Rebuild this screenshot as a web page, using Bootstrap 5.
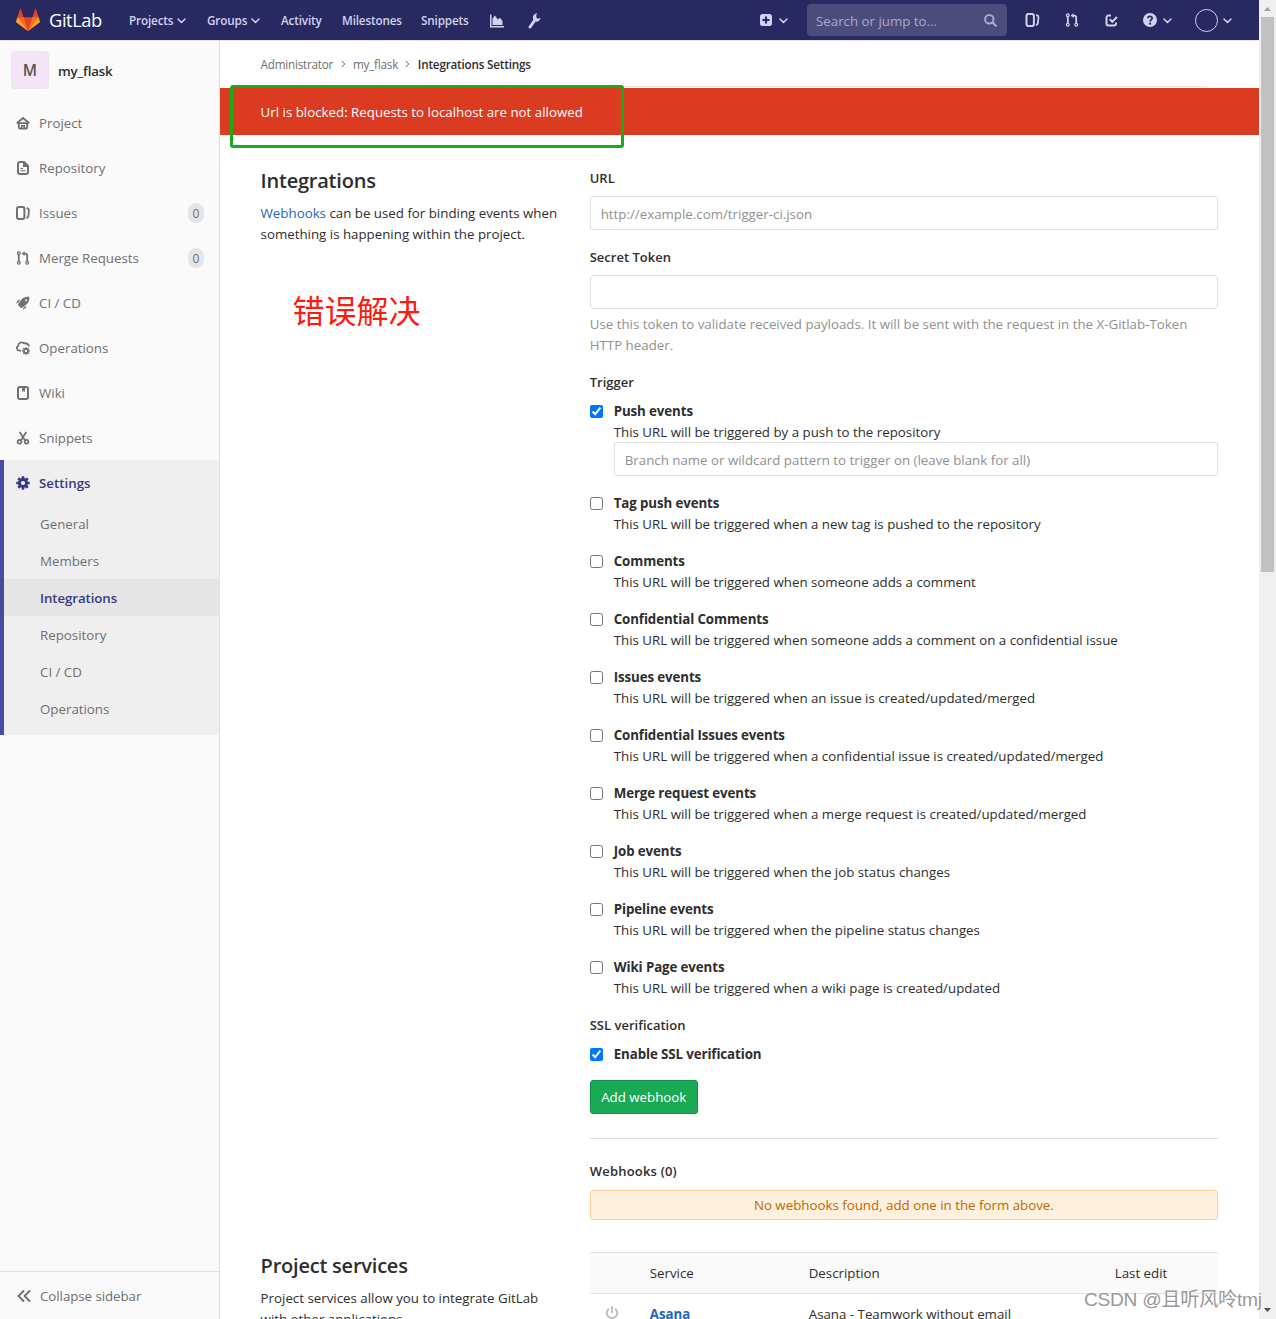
<!DOCTYPE html>
<html lang="en">
<head>
<meta charset="utf-8">
<title>Integrations Settings · my_flask · GitLab</title>
<link href="https://cdn.jsdelivr.net/npm/bootstrap@5.3.0/dist/css/bootstrap.min.css" rel="stylesheet">
<style>
body{font-family:"Open Sans","Noto Sans CJK SC",sans-serif;font-size:13.3px;line-height:21px;color:#2e2e2e;height:100vh;overflow:hidden}
a{text-decoration:none}
svg{display:block;flex:none}
.app{width:1259px}
.topbar{height:40px;background:#292961;color:#d1d1f0;font-size:11.7px;font-weight:600;letter-spacing:-.14px;padding-left:16px;box-shadow:0 1px 0 #e5e5e5;z-index:2}
.topbar a{color:#d1d1f0}
.topbar>a{padding-top:1px}
.brand-word{font-size:18.3px;font-weight:400;color:#fff!important;width:80px;margin-left:9px;letter-spacing:-.4px;padding:0 0 1px!important}
.w-proj{width:78px}.w-grp{width:74px}.w-act{width:61px}.w-mil{width:79px}.w-snip{width:68px}.w-chart{width:39px}
.caret{width:9px;height:6px;margin-left:4px}
.jump{width:200px;height:32px;background:#4c4c7c;border-radius:4px;margin:0 18px 0 19px;padding:0 10px 0 9px;color:#a9a9cf;font-size:13.3px;font-weight:400;letter-spacing:0}
.jump span{padding-top:2px}
.face{width:23px;height:23px;border:1px solid #d1d1f0;border-radius:50%}
.sidebar{width:220px;background:#fafafa;border-right:1px solid #e1e1e1;flex:none}
.sidebar a{color:#707070}
.context{padding:11px 11px 10px;height:60px;gap:9px}
.letter{width:38px;height:38px;border-radius:4px;background:#f3e5f5;color:#555;font-size:15.5px;border:1px solid #eee3f0}
.proj-name{padding-top:2px;letter-spacing:-.15px}
.item{height:45px;padding:1px 15px 0 16px;gap:9px}
.item>svg{width:14px;height:14px}
.count{background:#e5e5e5;border-radius:10px;width:16px;height:20px;line-height:21px;text-align:center;font-size:12px;font-weight:400;color:#707070}
.open-group{background:#efefef;box-shadow:inset 4px 0 0 #4b4ba3;padding-bottom:8px}
.open-group .top{color:#393982;font-weight:600}
.sub{height:37px;padding:1px 0 0 40px}
.sub.on{background:rgba(0,0,0,.04);color:#393982;font-weight:600;letter-spacing:-.1px}
.collapser{height:48px;border-top:1px solid #e1e1e1;padding:1px 0 0 17px;gap:9px;letter-spacing:-.05px}
.page{padding:0 41px 0 40.600px}
.crumbs{height:47px;margin:0 11px 0 0;border-bottom:1px solid #e5e5e5;font-size:11.700px;color:#707070;padding-top:3px;letter-spacing:-.22px;gap:7.400px}
.crumbs svg{margin-top:-2px}
.crumbs .here{color:#2e2e2e;font-weight:600;letter-spacing:-.2px}
.flash{height:47px;margin:1px -41px 0 -40.600px;padding:1px 41px 0 40.600px;background:#db3b21;color:#fff}
.marker{position:absolute;left:230px;top:85px;width:394px;height:63px;border:3px solid #1aaa1a;border-radius:3px;z-index:3}
.row.wide{--bs-gutter-x:30px}
.title{font-size:20px;line-height:26px;font-weight:600;margin:0 0 9px;letter-spacing:-.22px}
.blue{color:#1b69b6}
.note-red{font-size:32px;line-height:34px;color:#ff1a0f;font-family:"Noto Sans CJK SC",sans-serif;margin:47px 0 0 32px}
.lab{font-weight:600;margin-bottom:7px;display:block;font-size:13px}
.field{height:34px;border:1px solid #dfdfdf;border-radius:3px;padding:1px 10px 0;font-size:13.3px;color:#2e2e2e;font-family:inherit}
.field::placeholder{color:#919191;opacity:1}
.field.branch{margin:-1px 0 1px;padding-top:2px}
.help{color:#919191;margin:5px 0 16px}
.check{gap:11px;margin-bottom:16px}
.check input[type=checkbox]{width:13px;height:13px;margin:4px 0 0;flex:none}
.check b{font-weight:700;display:block;letter-spacing:-.1px}
.btn-add{background:#1aaa55;border:1px solid #168f48;color:#fff;border-radius:3px;height:34px;width:108px;padding:2px 0 0;font-size:13.3px}
.rule{border:0;border-top:1px solid #dcdcdc;opacity:1;margin:24px 0 22px}
.none{height:30px;border:1px solid #fdcf91;background:#fff1de;color:#c26700;border-radius:3px;line-height:29px;margin-bottom:32px}
.services{--bs-table-color:#2e2e2e;border-color:#e5e5e5;table-layout:fixed;border-top:1px solid #e1e1e1;margin:0}
.services>*>tr>*{padding:10px 10px 9px;font-weight:400}
.services thead th{--bs-table-bg:#fafafa}
.scroller{width:17px;background:#f0f0f0;padding:0 3px 0 2px}
.thumb{width:13px;height:555px;background:#c1c1c1}
.stamp{position:absolute;left:1084px;top:1285px;font:19.2px/30px "Liberation Sans","Noto Sans CJK SC",sans-serif;letter-spacing:-.3px;color:#999;text-shadow:1px 1px 0 #fff;white-space:nowrap;z-index:5}
</style>
</head>
<body>
<svg width="0" height="0" class="position-absolute">
  <defs>
    <symbol id="i-down" viewBox="0 0 9 6"><path d="M1 1l3.5 3.5L8 1" fill="none" stroke="currentColor" stroke-width="1.500" stroke-linecap="round" stroke-linejoin="round"/></symbol>
    <symbol id="i-issues" viewBox="0 0 14 14"><rect x="1" y="1" width="7.4" height="12" rx="2" fill="none" stroke="currentColor" stroke-width="2"/><path d="M10.6 2.200c2 .2 2.500 1 2.300 2.700L12.400 9.800c-.2 1.500-.7 2.200-2 2.300" fill="none" stroke="currentColor" stroke-width="1.800"/></symbol>
    <symbol id="i-merge" viewBox="0 0 14 14"><g fill="none" stroke="currentColor"><path d="M2.800 4v6" stroke-width="1.800"/><path d="M8 2.600h1.200c1.400 0 2 .7 2 2V10" stroke-width="1.800"/><circle cx="2.800" cy="2.300" r="1.400" stroke-width="1.200"/><circle cx="2.800" cy="11.800" r="1.400" stroke-width="1.200"/><circle cx="11.200" cy="11.800" r="1.400" stroke-width="1.200"/></g><path d="M8.600.2v4.800L5.600 2.600z" fill="currentColor"/></symbol>
    <symbol id="i-gear" viewBox="0 0 16 16"><circle cx="8" cy="8" r="4.100" fill="none" stroke="currentColor" stroke-width="3.400"/><path d="M8 .3v3M8 12.700v3M.3 8h3M12.700 8h3M2.600 2.600l2 2M11.400 11.400l2 2M2.600 13.400l2-2M11.400 4.600l2-2" stroke="currentColor" stroke-width="3"/></symbol>
  </defs>
</svg>

<div class="d-flex h-100">
<div class="app d-flex flex-column h-100">
  <header class="topbar d-flex align-items-center flex-shrink-0 position-relative">
    <svg width="24" height="24" viewBox="0 0 36 36"><path fill="#e24329" d="M2 14l9.380 9v-9l-4-12.280c-.205-.632-1.176-.632-1.380 0zM34 14l-9.380 9v-9l4-12.280c.205-.632 1.176-.632 1.380 0zM18 34.380L3 14h30z"/><path fill="#fc6d26" d="M18 34.380L11.380 14H2l4 11zM18 34.380L24.620 14H34l-4 11z"/><path fill="#fca326" d="M2 14L.1 20.160c-.18.565 0 1.200.5 1.560l17.420 12.660zM34 14l1.900 6.160c.18.565 0 1.200-.5 1.560L18 34.380z"/></svg>
    <a class="brand-word" href="#">GitLab</a>
    <a class="w-proj d-flex align-items-center" href="#">Projects<svg class="caret"><use href="#i-down"/></svg></a>
    <a class="w-grp d-flex align-items-center" href="#">Groups<svg class="caret"><use href="#i-down"/></svg></a>
    <a class="w-act" href="#">Activity</a>
    <a class="w-mil" href="#">Milestones</a>
    <a class="w-snip" href="#">Snippets</a>
    <a class="w-chart ps-1" href="#"><svg width="14" height="14" viewBox="0 0 14 14" style="margin-left:-3px"><path fill="currentColor" d="M0 .5h1.500V12H14v1.500H0zM2.500 11V4.500L5 1.500l2.800 4L10 3.800 12.500 7v4z"/></svg></a>
    <a href="#"><svg width="13" height="16" viewBox="0 0 13 16"><path d="M2 14L7 7" stroke="currentColor" stroke-width="3" stroke-linecap="round"/><path d="M9.200.3C5.500.8 4.200 3.800 5.200 6.600l2.600 2c2.600.4 4.400-1.500 4.700-4.200l-2 1.300-2-.8-.3-2.300z" fill="currentColor"/></svg></a>
    <div class="ms-auto d-flex align-items-center">
      <svg width="12" height="12" viewBox="0 0 12 12"><rect width="12" height="12" rx="2.500" fill="#d1d1f0"/><path d="M6 2.500v7M2.500 6h7" stroke="#292961" stroke-width="2"/></svg>
      <svg class="caret" style="margin:2px 0 0 7px"><use href="#i-down"/></svg>
      <div class="jump d-flex align-items-center justify-content-between"><span>Search or jump to...</span><svg width="13" height="13" viewBox="0 0 13 13"><circle cx="5.300" cy="5.300" r="4.200" fill="none" stroke="currentColor" stroke-width="2"/><path d="M8.500 8.500l3.300 3.300" stroke="currentColor" stroke-width="2.200" stroke-linecap="round"/></svg></div>
      <svg width="15" height="14"><use href="#i-issues"/></svg>
      <svg width="14" height="14" style="margin-left:25px"><use href="#i-merge"/></svg>
      <svg width="13" height="13" viewBox="0 0 13 13" style="margin-left:26px"><path d="M6 1.500H3.500a2 2 0 0 0-2 2v6a2 2 0 0 0 2 2h5.500a2 2 0 0 0 2-2V8.500M4.800 5.300l2.500 2.500L12 3" fill="none" stroke="currentColor" stroke-width="2"/></svg>
      <svg width="14" height="14" viewBox="0 0 14 14" style="margin-left:25px"><circle cx="7" cy="7" r="7" fill="#d1d1f0"/><path d="M4.900 5.300C5 2.700 9.300 2.800 9.200 5.300 9.100 6.800 7.100 6.700 7.100 8.500" fill="none" stroke="#292961" stroke-width="1.700"/><circle cx="7.100" cy="10.700" r="1.100" fill="#292961"/></svg>
      <svg class="caret" style="margin:2px 0 0 6px"><use href="#i-down"/></svg>
      <span class="face" style="margin-left:23px"></span>
      <svg class="caret" style="margin:2px 27px 0 5px"><use href="#i-down"/></svg>
    </div>
  </header>

  <div class="d-flex flex-grow-1 overflow-hidden">
    <nav class="sidebar d-flex flex-column">
      <div class="context d-flex"><span class="letter d-flex align-items-center justify-content-center fw-semibold">M</span><span class="proj-name fw-semibold align-self-center">my_flask</span></div>
      <a class="item d-flex align-items-center" href="#"><svg viewBox="0 0 14 14"><path d="M.8 7.200L7 2l6.200 5.200M2.800 7v4.200c0 .9.500 1.300 1.300 1.300h5.800c.8 0 1.300-.4 1.300-1.300V7" fill="none" stroke="currentColor" stroke-width="1.800"/><path d="M1 6.200h12V8H1zM5 9h4v3H7.900v-1.200H6.100V12H5z" fill="currentColor"/></svg>Project</a>
      <a class="item d-flex align-items-center" href="#"><svg viewBox="0 0 14 14"><path d="M8 1H4a2 2 0 0 0-2 2v8a2 2 0 0 0 2 2h6a2 2 0 0 0 2-2V5z" fill="none" stroke="currentColor" stroke-width="2"/><path d="M7 .5L12.500 6H7zM4.500 7H7v1H4.500zM4.500 9.200h5v1h-5z" fill="currentColor"/></svg>Repository</a>
      <a class="item d-flex align-items-center" href="#"><svg><use href="#i-issues"/></svg>Issues<span class="count ms-auto">0</span></a>
      <a class="item d-flex align-items-center" href="#"><svg><use href="#i-merge"/></svg>Merge Requests<span class="count ms-auto">0</span></a>
      <a class="item d-flex align-items-center" href="#"><svg viewBox="0 0 14 14"><path fill="currentColor" fill-rule="evenodd" d="M13.200.8C9.500.4 6.800 1.500 4.800 4.300L1.800 8.800l3.400 3.400 4.700-3.200C12.600 7 13.600 4.300 13.200.8zM10 3.200a1 1 0 1 1 0 2 1 1 0 0 1 0-2zM4.300 3.600L2.300 4 0 7.200l2.200-.4zM10.200 9.800l-.3 2-3 2.200.4-2.200z"/></svg>CI / CD</a>
      <a class="item d-flex align-items-center" href="#"><svg viewBox="0 0 14 14"><path d="M5.200 9.700H3.500C.5 9.500.2 5.800 2.200 5 2 1.600 5.500.6 8 2.300c2.800-.2 4.600.9 4.900 3.200" fill="none" stroke="currentColor" stroke-width="1.800"/><svg x="6" y="6" width="8" height="8" viewBox="0 0 16 16"><use href="#i-gear"/></svg></svg>Operations</a>
      <a class="item d-flex align-items-center" href="#"><svg viewBox="0 0 14 14"><rect x="2" y="1" width="10" height="12" rx="2" fill="none" stroke="currentColor" stroke-width="2"/><path d="M6 1h3v5L7.500 5 6 6z" fill="currentColor"/></svg>Wiki</a>
      <a class="item d-flex align-items-center" href="#"><svg viewBox="0 0 14 14"><g fill="none" stroke="currentColor" stroke-width="1.700"><path d="M3.700 1l5.400 8.500M10.300 1L4.900 9.500"/><circle cx="3.500" cy="10.800" r="1.900"/><circle cx="10.500" cy="10.800" r="1.900"/></g></svg>Snippets</a>
      <div class="open-group">
        <a class="item top d-flex align-items-center" href="#"><svg><use href="#i-gear"/></svg>Settings</a>
        <a class="sub d-flex align-items-center" href="#">General</a>
        <a class="sub d-flex align-items-center" href="#">Members</a>
        <a class="sub on d-flex align-items-center" href="#">Integrations</a>
        <a class="sub d-flex align-items-center" href="#">Repository</a>
        <a class="sub d-flex align-items-center" href="#">CI / CD</a>
        <a class="sub d-flex align-items-center" href="#">Operations</a>
      </div>
      <a class="collapser d-flex align-items-center mt-auto" href="#"><svg width="14" height="12" viewBox="0 0 14 12"><path d="M6.500 1l-5 5 5 5M12.500 1l-5 5 5 5" fill="none" stroke="currentColor" stroke-width="1.900" stroke-linecap="round" stroke-linejoin="round"/></svg>Collapse sidebar</a>
    </nav>

    <main class="page flex-grow-1 overflow-hidden">
      <div class="crumbs d-flex align-items-center"><span>Administrator</span><svg width="5" height="8" viewBox="0 0 5 8"><path d="M1 1l2.800 3L1 7" fill="none" stroke="#707070"/></svg><span>my_flask</span><svg width="5" height="8" viewBox="0 0 5 8"><path d="M1 1l2.800 3L1 7" fill="none" stroke="#707070"/></svg><span class="here">Integrations Settings</span></div>
      <div class="flash d-flex align-items-center"><span>Url is blocked: Requests to localhost are not allowed</span></div>

      <div class="row wide" style="padding-top:33px">
        <div class="col-4">
          <h4 class="title">Integrations</h4>
          <p class="m-0"><a class="blue" href="#">Webhooks</a> can be used for binding events when<br>something is happening within the project.</p>
          <div class="note-red">错误解决</div>
        </div>
        <div class="col-8">
          <label class="lab">URL</label>
          <input class="field form-control" placeholder="http://example.com/trigger-ci.json">
          <label class="lab" style="margin-top:17px">Secret Token</label>
          <input class="field form-control">
          <p class="help">Use this token to validate received payloads. It will be sent with the request in the X-Gitlab-Token<br>HTTP header.</p>
          <label class="lab mb-2">Trigger</label>
          <div class="check d-flex"><input type="checkbox" checked><div class="flex-grow-1"><b>Push events</b>This URL will be triggered by a push to the repository<input class="field branch form-control" placeholder="Branch name or wildcard pattern to trigger on (leave blank for all)"></div></div>
          <div class="check d-flex"><input type="checkbox"><div><b>Tag push events</b>This URL will be triggered when a new tag is pushed to the repository</div></div>
          <div class="check d-flex"><input type="checkbox"><div><b>Comments</b>This URL will be triggered when someone adds a comment</div></div>
          <div class="check d-flex"><input type="checkbox"><div><b>Confidential Comments</b>This URL will be triggered when someone adds a comment on a confidential issue</div></div>
          <div class="check d-flex"><input type="checkbox"><div><b>Issues events</b>This URL will be triggered when an issue is created/updated/merged</div></div>
          <div class="check d-flex"><input type="checkbox"><div><b>Confidential Issues events</b>This URL will be triggered when a confidential issue is created/updated/merged</div></div>
          <div class="check d-flex"><input type="checkbox"><div><b>Merge request events</b>This URL will be triggered when a merge request is created/updated/merged</div></div>
          <div class="check d-flex"><input type="checkbox"><div><b>Job events</b>This URL will be triggered when the job status changes</div></div>
          <div class="check d-flex"><input type="checkbox"><div><b>Pipeline events</b>This URL will be triggered when the pipeline status changes</div></div>
          <div class="check d-flex"><input type="checkbox"><div><b>Wiki Page events</b>This URL will be triggered when a wiki page is created/updated</div></div>
          <label class="lab mb-2">SSL verification</label>
          <div class="check d-flex" style="margin-bottom:15px"><input type="checkbox" checked><b>Enable SSL verification</b></div>
          <button class="btn btn-add d-block">Add webhook</button>
          <hr class="rule">
          <label class="lab mb-2" style="letter-spacing:.2px">Webhooks (0)</label>
          <div class="none text-center">No webhooks found, add one in the form above.</div>
        </div>
      </div>
      <div class="row wide">
        <div class="col-4">
          <h4 class="title" style="padding-top:1px">Project services</h4>
          <p class="m-0">Project services allow you to integrate GitLab<br>with other applications</p>
        </div>
        <div class="col-8">
          <table class="table services">
            <colgroup><col style="width:50px"><col style="width:159px"><col style="width:306px"><col></colgroup>
            <thead><tr><th></th><th>Service</th><th>Description</th><th>Last edit</th></tr></thead>
            <tbody><tr><td><svg width="14" height="14" viewBox="0 0 14 14" style="margin:2px 0 0 5px"><path d="M4 2.700a5.200 5.200 0 1 0 6 0M7 .3v6.700" fill="none" stroke="#bfbfbf" stroke-width="2"/></svg></td><td><a class="blue fw-bold" href="#">Asana</a></td><td>Asana - Teamwork without email</td><td></td></tr></tbody>
          </table>
        </div>
      </div>
    </main>
  </div>
</div>
<div class="scroller d-flex flex-column h-100">
  <svg width="13" height="17" viewBox="0 0 13 17"><path d="M3 11h7L6.500 7z" fill="#a3a3a3"/></svg>
  <div class="thumb"></div>
  <svg class="mt-auto" width="13" height="17" viewBox="0 0 13 17"><path d="M3 6h7L6.500 10z" fill="#505050"/></svg>
</div>
</div>
<div class="marker"></div>
<div class="stamp">CSDN @且听风呤tmj</div>
<script src="https://cdn.jsdelivr.net/npm/bootstrap@5.3.0/dist/js/bootstrap.bundle.min.js"></script>
</body>
</html>
